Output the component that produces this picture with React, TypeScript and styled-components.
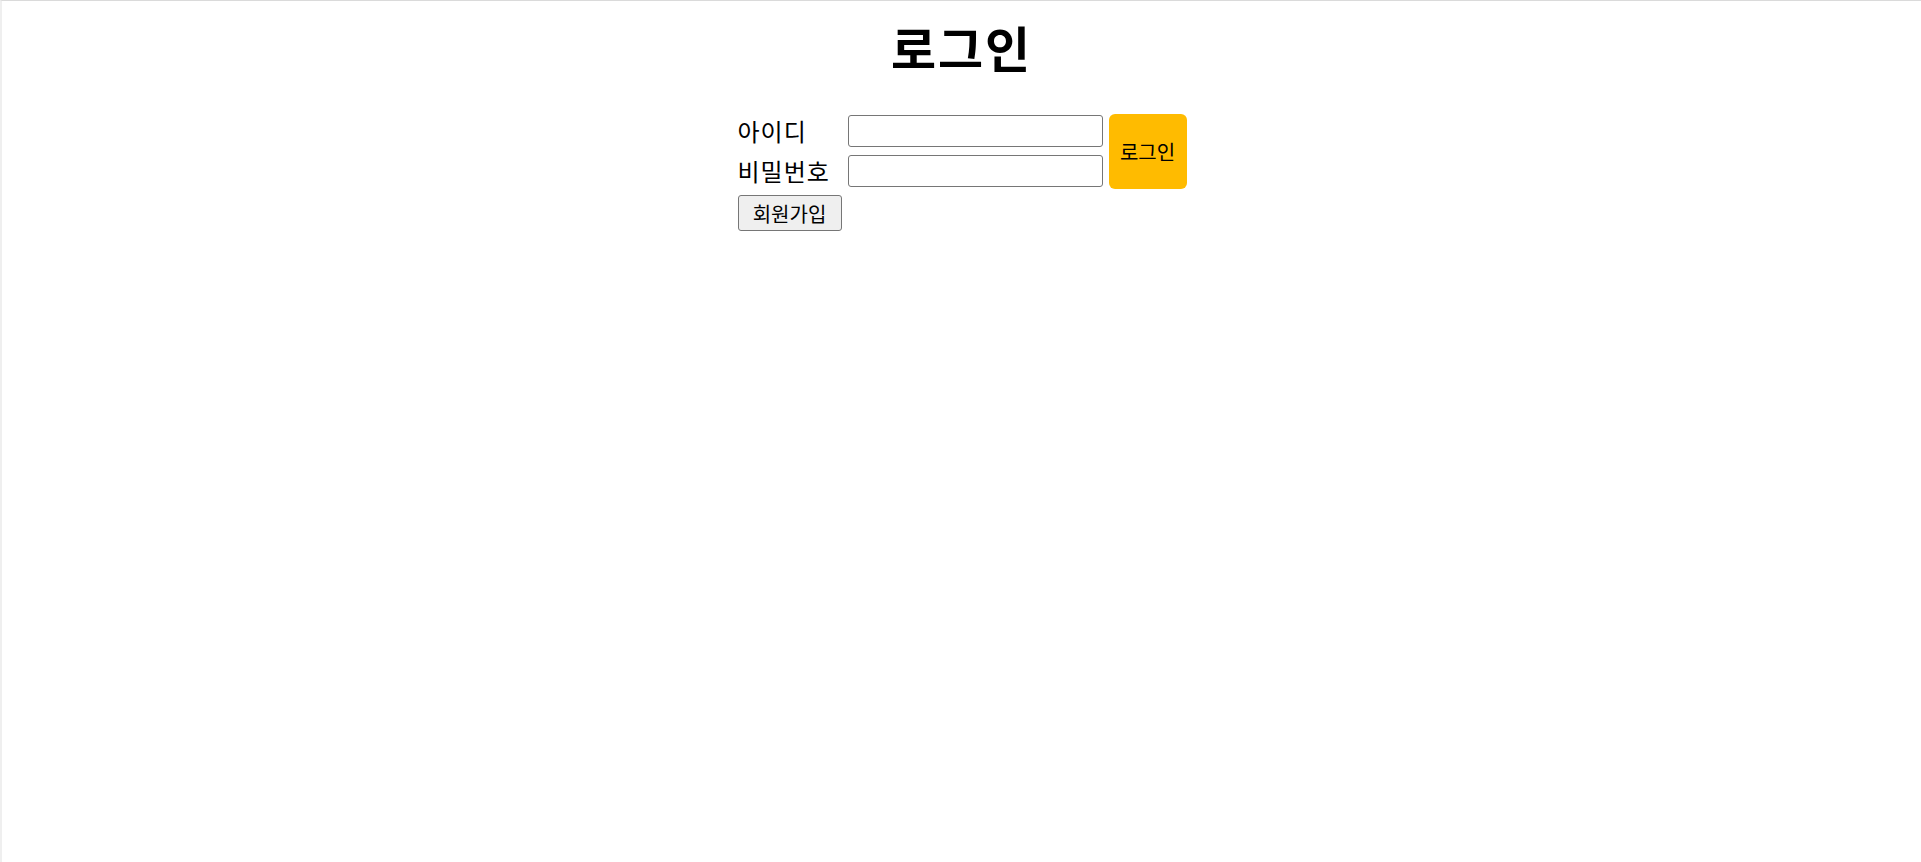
import * as React from 'react';
import styled, { createGlobalStyle } from 'styled-components';

const GlobalStyle = createGlobalStyle`
  html, body {
    margin: 0;
    padding: 0;
    background: #fff;
  }
  body {
    font-family: "Noto Sans CJK KR", "Noto Sans", sans-serif;
    color: #000;
  }
`;

const Page = styled.div`
  min-height: 862px;
  box-sizing: border-box;
  border-top: 1px solid #dadada;
  border-left: 2px solid #efefef;
  display: flex;
  flex-direction: column;
  align-items: center;
`;

const Title = styled.h1`
  margin: 0;
  padding-top: 17px;
  font-size: 49px;
  line-height: 58px;
  font-weight: 700;
  letter-spacing: 2px;
`;

const Form = styled.form`
  margin-top: 37px;
  margin-left: 1px;
  display: flex;
  flex-direction: column;
  align-items: flex-start;
  gap: 6px;
`;

const Fields = styled.div`
  display: grid;
  grid-template-columns: 104px 255px 78px;
  grid-template-rows: 36px 36px;
  column-gap: 6px;
  row-gap: 4px;
  align-items: center;
`;

const Label = styled.label`
  font-size: 24px;
  line-height: 30px;
  letter-spacing: 1px;
  white-space: nowrap;
`;

const Input = styled.input`
  box-sizing: border-box;
  width: 255px;
  height: 32px;
  margin: 0;
  padding: 1px 3px;
  border: 1px solid #767676;
  border-radius: 3px;
  background: #fff;
  font-size: 20px;
`;

const LoginButton = styled.button`
  grid-column: 3;
  grid-row: 1 / span 2;
  align-self: stretch;
  margin: 1px 0 0;
  border: none;
  border-radius: 6px;
  background: #ffbb00;
  color: #000;
  font-family: inherit;
  font-size: 20px;
  padding: 0;
`;

const JoinButton = styled.button`
  box-sizing: border-box;
  width: 104px;
  height: 36px;
  margin: 0;
  padding: 0;
  border: 1px solid #767676;
  border-radius: 3px;
  background: #efefef;
  color: #000;
  font-family: inherit;
  font-size: 20px;
`;

export default function App() {
  return (
    <>
      <GlobalStyle />
      <Page>
        <Title>로그인</Title>
        <Form onSubmit={(e) => e.preventDefault()}>
          <Fields>
            <Label htmlFor="userId">아이디</Label>
            <Input id="userId" type="text" />
            <LoginButton type="submit">로그인</LoginButton>
            <Label htmlFor="userPw">비밀번호</Label>
            <Input id="userPw" type="password" />
          </Fields>
          <JoinButton type="button">회원가입</JoinButton>
        </Form>
      </Page>
    </>
  );
}
